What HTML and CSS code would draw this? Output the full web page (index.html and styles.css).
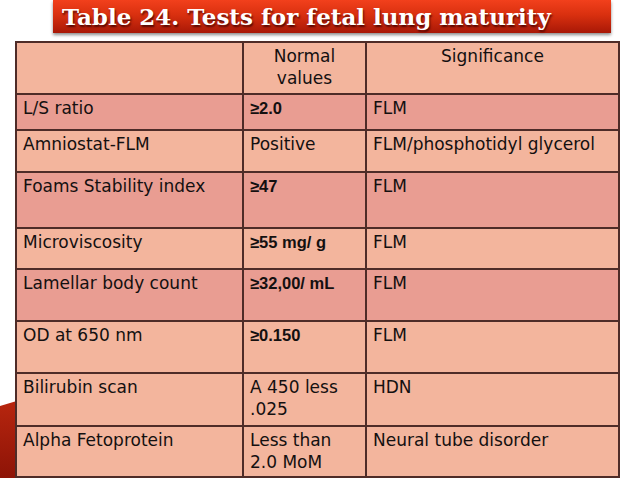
FILE: index.html
```html
<!DOCTYPE html>
<html>
<head>
<meta charset="utf-8">
<link rel="stylesheet" href="styles.css">
</head>
<body>
<div class="slide">
  <svg class="corner" width="20" height="80" viewBox="0 0 20 80">
    <defs>
      <linearGradient id="cg" x1="0" y1="0" x2="0" y2="1">
        <stop offset="0" stop-color="#b8260f"/>
        <stop offset="1" stop-color="#8c1306"/>
      </linearGradient>
    </defs>
    <path d="M0 6 L20 0 L20 80 L0 80 Z" fill="url(#cg)"/>
  </svg>
  <div class="titlebar">
    <h1 class="title">Table 24. Tests for fetal lung maturity</h1>
  </div>
  <table class="grid">
    <colgroup>
      <col class="c1"><col class="c2"><col class="c3">
    </colgroup>
    <tr class="hdr light"><td></td><td class="center">Normal<br>values</td><td class="center">Significance</td></tr>
    <tr class="r-ls dark"><td>L/S ratio</td><td class="num">≥2.0</td><td>FLM</td></tr>
    <tr class="r-am light"><td>Amniostat-FLM</td><td>Positive</td><td>FLM/phosphotidyl glycerol</td></tr>
    <tr class="r-fo dark"><td>Foams Stability index</td><td class="num">≥47</td><td>FLM</td></tr>
    <tr class="r-mi light"><td>Microviscosity</td><td class="num">≥55 mg/ g</td><td>FLM</td></tr>
    <tr class="r-la dark"><td>Lamellar body count</td><td class="num">≥32,00/ mL</td><td>FLM</td></tr>
    <tr class="r-od light"><td>OD at 650 nm</td><td class="num">≥0.150</td><td>FLM</td></tr>
    <tr class="r-bi light"><td>Bilirubin scan</td><td>A 450 less<br>.025</td><td>HDN</td></tr>
    <tr class="r-al light"><td>Alpha Fetoprotein</td><td>Less than<br>2.0 MoM</td><td>Neural tube disorder</td></tr>
  </table>
</div>
</body>
</html>
```
FILE: styles.css
```css
* { box-sizing: border-box; }
html, body { margin: 0; padding: 0; background: #ffffff; }
body { width: 638px; height: 478px; overflow: hidden; }
.slide {
  position: relative;
  width: 638px;
  height: 478px;
  padding: 0 0 0 15px;
  display: flex;
  flex-direction: column;
}
.corner {
  position: absolute;
  left: 0;
  top: 400px;
}
.titlebar {
  margin-left: 38px;
  width: 558px;
  height: 34px;
  background: linear-gradient(to bottom, #f2401c 0%, #d9300f 45%, #a81806 100%);
  box-shadow: 0 2px 3px rgba(0,0,0,0.45);
  display: flex;
  align-items: center;
  padding-left: 9px;
}
.title {
  margin: 0;
  font-family: "DejaVu Serif", serif;
  font-weight: bold;
  font-size: 23px;
  color: #ffffff;
  white-space: nowrap;
  text-shadow: 1px 2px 2px rgba(60,0,0,0.8);
}
.grid {
  position: relative;
  margin-top: 8px;
  width: 603px;
  border-collapse: collapse;
  table-layout: fixed;
  font-family: "DejaVu Sans", sans-serif;
  font-size: 17px;
  line-height: 22px;
  color: #141010;
}
.c1 { width: 227px; }
.c2 { width: 123px; }
.c3 { width: 253px; }
.grid td {
  border: 2px solid #4e2c28;
  vertical-align: top;
  padding: 2px 6px 0 6px;
  white-space: nowrap;
}
.light td { background: #f3b59d; }
.dark td { background: #e99d92; }
.center { text-align: center; }
.num { font-family: "Liberation Sans", sans-serif; font-weight: bold; font-size: 16.5px; }
.hdr td { height: 52px; }
.r-ls td { height: 36px; }
.r-am td { height: 42px; }
.r-fo td { height: 56px; }
.r-mi td { height: 41px; }
.r-la td { height: 52px; }
.r-od td { height: 52px; }
.r-bi td { height: 53px; }
.r-al td { height: 51px; }
```
